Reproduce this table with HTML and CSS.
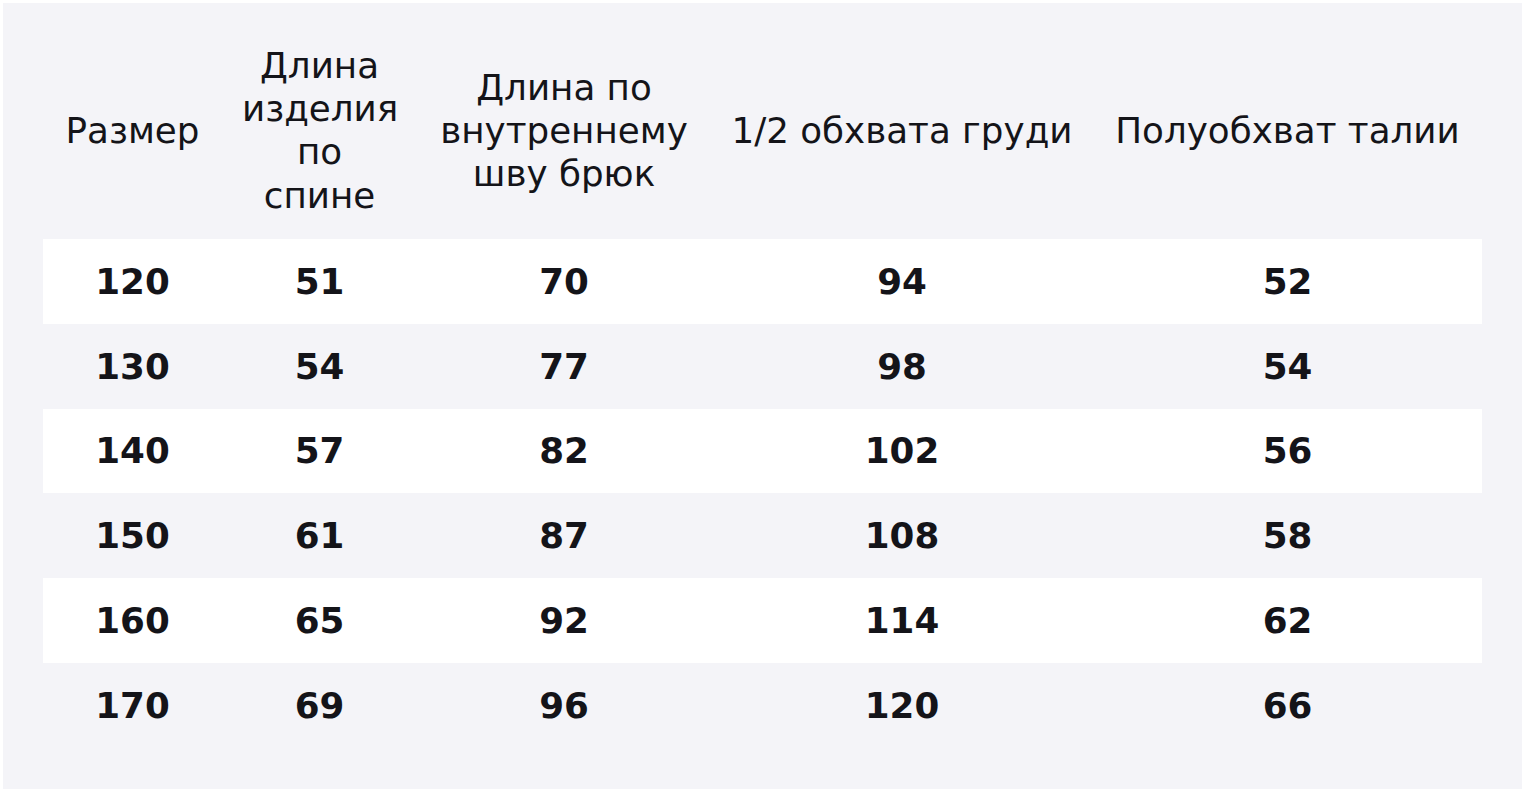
FILE: index.html
```html
<!DOCTYPE html>
<html lang="ru">
<head>
<meta charset="utf-8">
<title>Таблица размеров</title>
<link rel="stylesheet" href="styles.css">
</head>
<body>
<div class="panel">
  <table class="sizes">
    <colgroup>
      <col class="c1"><col class="c2"><col class="c3"><col class="c4"><col class="c5">
    </colgroup>
    <thead>
      <tr>
        <th>Размер</th>
        <th>Длина изделия по спине</th>
        <th>Длина по внутреннему шву брюк</th>
        <th class="single">1/2 обхвата груди</th>
        <th class="single">Полуобхват талии</th>
      </tr>
    </thead>
    <tbody>
      <tr><td>120</td><td>51</td><td>70</td><td>94</td><td>52</td></tr>
      <tr><td>130</td><td>54</td><td>77</td><td>98</td><td>54</td></tr>
      <tr><td>140</td><td>57</td><td>82</td><td>102</td><td>56</td></tr>
      <tr><td>150</td><td>61</td><td>87</td><td>108</td><td>58</td></tr>
      <tr><td>160</td><td>65</td><td>92</td><td>114</td><td>62</td></tr>
      <tr><td>170</td><td>69</td><td>96</td><td>120</td><td>66</td></tr>
    </tbody>
  </table>
</div>
</body>
</html>
```

FILE: styles.css
```css
html, body {
  margin: 0;
  background: #ffffff;
}
body {
  padding: 3px;
  font-family: "DejaVu Sans", "Noto Sans", sans-serif;
  color: #141419;
}
.panel {
  background: #f4f4f8;
  padding: 40px 40px 41px;
}
.sizes {
  width: 1439px;
  border-collapse: collapse;
  table-layout: fixed;
  font-size: 35.7px;
  line-height: 43.2px;
}
.c1 { width: 179px; }
.c2 { width: 195px; }
.c3 { width: 294px; }
.c4 { width: 382px; }
.c5 { width: 389px; }
.sizes th {
  font-weight: normal;
  padding: 1px 20px 22.2px;
  text-align: center;
  vertical-align: middle;
}
.sizes th.single {
  white-space: nowrap;
}
.sizes td {
  font-weight: bold;
  padding: 20.8px 20px;
  text-align: center;
}
.sizes tbody tr:nth-child(odd) {
  background: #ffffff;
}
```
